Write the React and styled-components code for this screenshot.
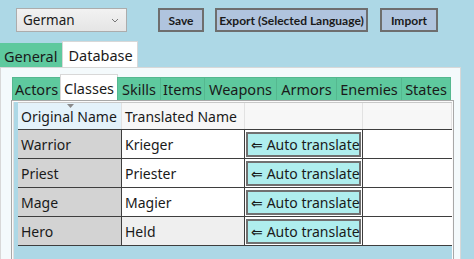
import React from "react";
import styled, { createGlobalStyle } from "styled-components";

const GlobalStyle = createGlobalStyle`
  html, body {
    margin: 0;
    padding: 0;
    background: #add8e6;
    font-family: "Noto Sans", "Open Sans", sans-serif;
    color: #1a1a1a;
  }
`;

const Window = styled.div`
  width: 474px;
  height: 259px;
  overflow: hidden;
  background: #add8e6;
`;

const Toolbar = styled.div`
  display: flex;
  align-items: center;
  height: 24px;
  padding: 8px 0 0 16px;
`;

const Combo = styled.div`
  box-sizing: border-box;
  width: 111px;
  height: 24px;
  display: flex;
  align-items: center;
  justify-content: space-between;
  padding: 0 7px 0 6px;
  background: linear-gradient(#f2f2f2, #e5e5e5);
  border: 1px solid #acacac;
  font-size: 13.5px;
  margin-right: 31px;
`;

const ToolButton = styled.div`
  box-sizing: border-box;
  width: ${(p) => p.w}px;
  height: 24px;
  margin-right: ${(p) => p.mr || 0}px;
  display: flex;
  align-items: center;
  justify-content: center;
  background: #b0c4de;
  border: 2px solid #6e6e6e;
  font-family: Lato, "Noto Sans", sans-serif;
  font-weight: bold;
  font-size: 12px;
  white-space: nowrap;
`;

const OuterTabs = styled.div`
  display: flex;
  align-items: flex-end;
  height: 26px;
  margin-top: 9px;
`;

const OuterTab = styled.div`
  box-sizing: border-box;
  height: ${(p) => (p.active ? 26 : 24)}px;
  padding: 0 ${(p) => (p.active ? 4 : 4)}px 0 ${(p) => (p.active ? 5 : 3)}px;
  display: flex;
  align-items: center;
  font-size: 14.5px;
  background: ${(p) => (p.active ? "#ffffff" : "#5ec99e")};
  border: 1px solid ${(p) => (p.active ? "#d8d8d8" : "#5ec99e")};
  border-bottom: none;
`;

const OuterPanel = styled.div`
  box-sizing: border-box;
  width: 461px;
  height: 200px;
  background: #f4fafc;
  border: 1px solid #d8d8d8;
  padding: 6px 0 0 10px;
`;

const InnerTabs = styled.div`
  display: flex;
  align-items: flex-end;
  height: 26px;
  padding-left: 2px;
`;

const InnerTab = styled.div`
  box-sizing: border-box;
  width: ${(p) => p.w}px;
  height: ${(p) => (p.active ? 26 : 23)}px;
  display: flex;
  align-items: center;
  justify-content: center;
  font-size: 14.5px;
  background: ${(p) => (p.active ? "#ffffff" : "#5ec99e")};
  border: 1px solid ${(p) => (p.active ? "#d8d8d8" : "#55b890")};
  border-bottom: none;
  margin-left: -1px;
`;

const InnerPanel = styled.div`
  box-sizing: border-box;
  width: 443px;
  height: 170px;
  border: 1px solid #a8a8a8;
  background: #fbfbfb;
  padding: 1px 1px 0 1px;
`;

const Grid = styled.div`
  height: 100%;
  background: #add8e6;
  padding-left: 4px;
  border-left: 1px solid #e0e0e0;
`;

const HeaderRow = styled.div`
  display: grid;
  grid-template-columns: 104px 123px 118px 1fr;
  height: 26px;
  background: #ffffff;
  border-top: 1px solid #c8c8c8;
`;

const HeaderCell = styled.div`
  display: flex;
  align-items: center;
  position: relative;
  padding-left: 3px;
  font-size: 14px;
  background: ${(p) => (p.sorted ? "#e4f2fa" : "#f7f7f7")};
  border-right: 1px solid #e2e2e2;
`;

const SortArrow = styled.svg`
  position: absolute;
  top: 1px;
  left: 49px;
`;

const Row = styled.div`
  display: grid;
  grid-template-columns: 104px 123px 118px 1fr;
  height: 28px;
  border-top: 1px solid #3e3e3e;
  background: #ffffff;
  &:last-child {
    border-bottom: 1px solid #3e3e3e;
  }
`;

const Cell = styled.div`
  display: flex;
  align-items: center;
  padding-left: 3px;
  font-size: 14px;
  background: ${(p) => p.bg || "transparent"};
  border-right: ${(p) => (p.line ? "1px solid #3e3e3e" : "none")};
`;

const ButtonCell = styled.div`
  display: flex;
  align-items: center;
  padding: 0 1px 0 1px;
  border-right: 1px solid #3e3e3e;
`;

const AutoButton = styled.div`
  box-sizing: border-box;
  width: 100%;
  height: 25px;
  display: flex;
  align-items: center;
  padding-left: 3px;
  background: #afeeee;
  border: 2px solid #707070;
  font-size: 14px;
  white-space: nowrap;
`;

const rows = [
  { original: "Warrior", translated: "Krieger" },
  { original: "Priest", translated: "Priester" },
  { original: "Mage", translated: "Magier" },
  { original: "Hero", translated: "Held", current: true },
];

const innerTabs = [
  { label: "Actors", w: 49 },
  { label: "Classes", w: 58, active: true },
  { label: "Skills", w: 44 },
  { label: "Items", w: 45 },
  { label: "Weapons", w: 73 },
  { label: "Armors", w: 61 },
  { label: "Enemies", w: 66 },
  { label: "States", w: 50 },
];

export default function App() {
  return (
    <Window>
      <GlobalStyle />
      <Toolbar>
        <Combo>
          German
          <svg width="8" height="5" viewBox="0 0 8 5">
            <path d="M1 1 L4 4 L7 1" fill="none" stroke="#777" strokeWidth="1" />
          </svg>
        </Combo>
        <ToolButton w={46} mr={11}>Save</ToolButton>
        <ToolButton w={153} mr={12}>Export (Selected Language)</ToolButton>
        <ToolButton w={58}>Import</ToolButton>
      </Toolbar>
      <OuterTabs>
        <OuterTab>General</OuterTab>
        <OuterTab active>Database</OuterTab>
      </OuterTabs>
      <OuterPanel>
        <InnerTabs>
          {innerTabs.map((t) => (
            <InnerTab key={t.label} w={t.w} active={t.active}>
              {t.label}
            </InnerTab>
          ))}
        </InnerTabs>
        <InnerPanel>
          <Grid>
            <HeaderRow>
              <HeaderCell sorted>
                <SortArrow width="7" height="4" viewBox="0 0 7 4">
                  <path d="M0 0 L7 0 L3.5 4 Z" fill="#8a8a8a" />
                </SortArrow>
                Original Name
              </HeaderCell>
              <HeaderCell>Translated Name</HeaderCell>
              <HeaderCell />
              <HeaderCell />
            </HeaderRow>
            {rows.map((r) => (
              <Row key={r.original}>
                <Cell bg="#d3d3d3" line>
                  {r.original}
                </Cell>
                <Cell bg={r.current ? "#efefef" : "#ffffff"} line>
                  {r.translated}
                </Cell>
                <ButtonCell>
                  <AutoButton>⇐ Auto translate</AutoButton>
                </ButtonCell>
                <Cell />
              </Row>
            ))}
          </Grid>
        </InnerPanel>
      </OuterPanel>
    </Window>
  );
}
